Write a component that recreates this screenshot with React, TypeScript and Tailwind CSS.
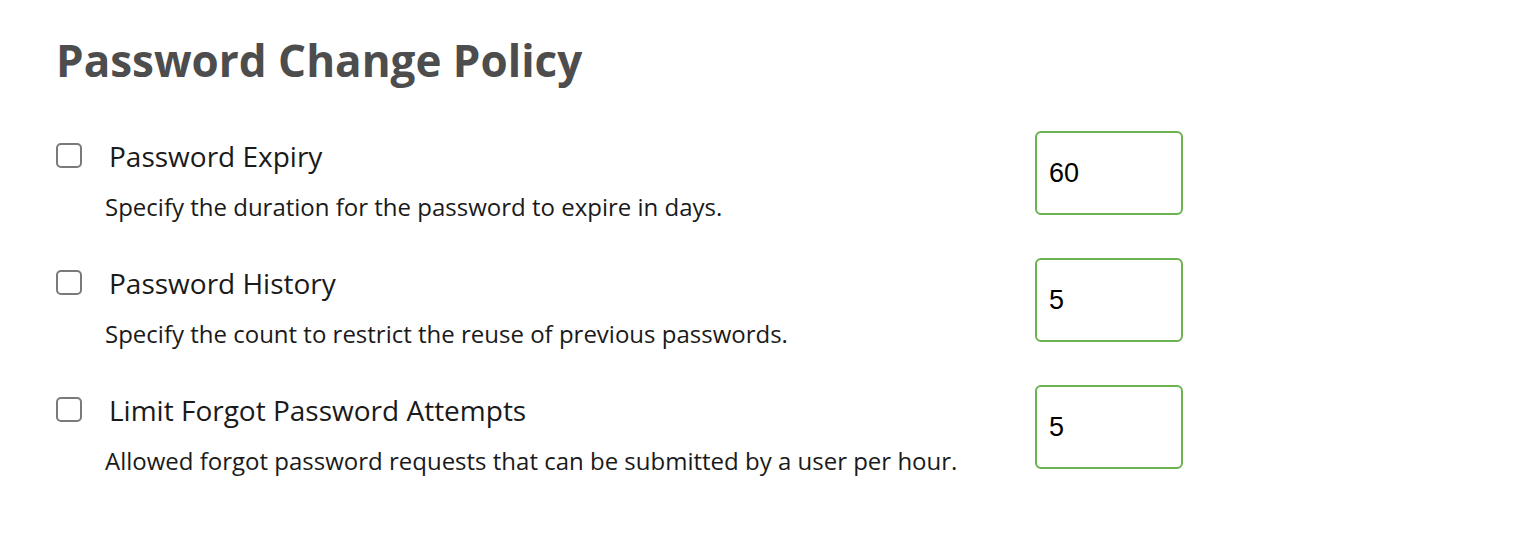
import React from "react";

const rows = [
  { label: "Password Expiry", desc: "Specify the duration for the password to expire in days.", value: "60" },
  { label: "Password History", desc: "Specify the count to restrict the reuse of previous passwords.", value: "5" },
  { label: "Limit Forgot Password Attempts", desc: "Allowed forgot password requests that can be submitted by a user per hour.", value: "5" },
];

export default function App() {
  return (
    <div className="w-[1532px] h-[546px] bg-white pl-[56px] pt-[30px]" style={{ fontFamily: '"Open Sans", sans-serif' }}>
      <h1 className="text-[44px] font-bold text-[#4d4d4d] leading-[60px]">Password Change Policy</h1>
      <div className="mt-[41px] flex flex-col gap-[25px]">
        {rows.map((r) => (
          <div key={r.label} className="flex items-start">
            <div className="w-[979px] flex flex-col">
              <div className="flex items-center h-[50px]">
                <span className="w-[26px] h-[25px] border-2 border-[#7a7a7a] rounded-[5px] shrink-0 -mt-[2px]" />
                <span className="ml-[27px] text-[28px] text-[#1a1a1a] leading-[40px]">{r.label}</span>
              </div>
              <div className="ml-[49px] text-[24px] text-[#1a1a1a] leading-[52px]">{r.desc}</div>
            </div>
            <div className="w-[148px] h-[84px] border-2 border-[#6ab150] rounded-[6px] flex items-center pl-[12px] text-[27px] leading-[32px] text-black" style={{ fontFamily: '"Liberation Sans", Arial, sans-serif' }}>
              {r.value}
            </div>
          </div>
        ))}
      </div>
    </div>
  );
}
